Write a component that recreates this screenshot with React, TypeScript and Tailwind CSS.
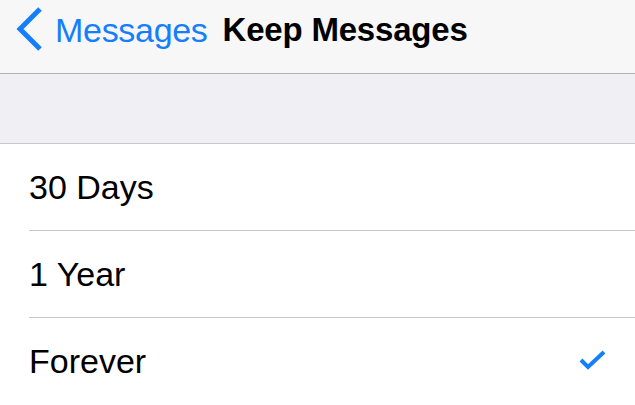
import React from "react";

const options = ["30 Days", "1 Year", "Forever"];
const selected = "Forever";

const App = () => {
  return (
    <div
      className="w-[635px] h-[405px] overflow-hidden bg-white"
      style={{ fontFamily: '"Liberation Sans", Arial, sans-serif' }}
    >
      {/* navigation bar */}
      <div className="h-[74px] bg-[#f7f7f7] border-b border-[#b2b2b2] flex items-start">
        <svg
          width="30"
          height="48"
          viewBox="0 0 30 48"
          className="ml-[14px] mt-[5px] shrink-0"
        >
          <polyline
            points="26,4 6,24 26,44"
            fill="none"
            stroke="#157efb"
            strokeWidth="5"
            strokeLinejoin="miter"
          />
        </svg>
        <span className="ml-[11px] pt-[13px] text-[34px] leading-[34px] text-[#157efb] tracking-[-0.3px]">
          Messages
        </span>
        <span className="ml-[15px] pt-[13px] text-[33px] leading-[34px] font-bold text-black tracking-[-0.2px]">
          Keep Messages
        </span>
      </div>

      {/* grouped header spacer */}
      <div className="h-[70px] bg-[#efeff4] border-b border-[#c8c7cc]" />

      {/* option list */}
      <div className="flex flex-col">
        {options.map((opt, i) => (
          <div key={opt} className="flex flex-col">
            <div className="h-[86px] flex items-center pl-[29px] pr-[28px]">
              <span className="text-[34px] leading-[34px] text-black flex-1">
                {opt}
              </span>
              {opt === selected && (
                <svg width="28" height="22" viewBox="0 0 28 22">
                  <polyline
                    points="2,10 9,17 25,2"
                    fill="none"
                    stroke="#157efb"
                    strokeWidth="4"
                  />
                </svg>
              )}
            </div>
            {i < options.length - 1 && (
              <div className="ml-[29px] h-px bg-[#c8c7cc]" />
            )}
          </div>
        ))}
      </div>
    </div>
  );
};

export default App;
